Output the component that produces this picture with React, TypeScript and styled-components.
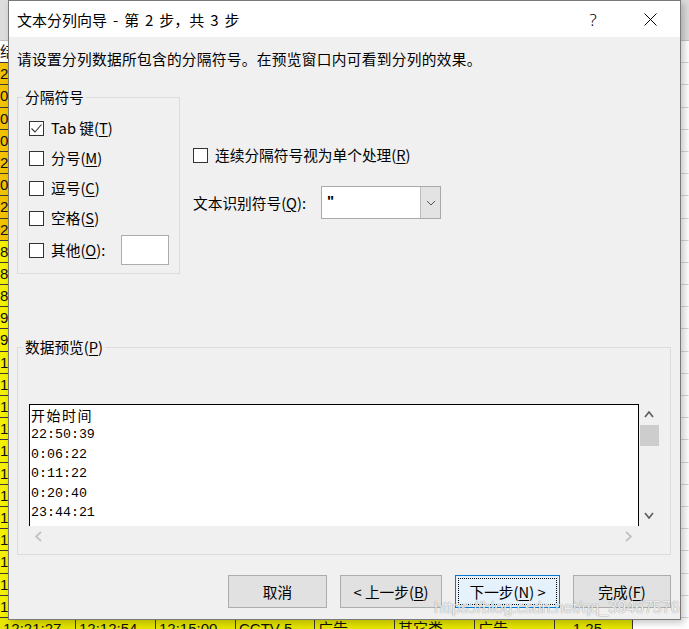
import React from "react";
import styled, { createGlobalStyle } from "styled-components";

const GlobalStyle = createGlobalStyle`
  html, body { margin: 0; padding: 0; background: #ffffff; }
  body { font-family: "Noto Sans CJK SC", sans-serif; }
  #root { width: 689px; height: 629px; }
`;

type Tone = "head" | "orange" | "yellow" | "lime" | "blank";

const toneBg: Record<Tone, string> = {
  head: "#ffffff",
  orange: "#f3c200",
  yellow: "#f4f000",
  lime: "#e6e600",
  blank: "#ffffff",
};

const Desktop = styled.div`
  position: relative;
  width: 689px;
  height: 629px;
  overflow: hidden;
  background: #ffffff;
`;

const Sheet = styled.div`
  display: flex;
  flex-direction: column;
  width: 689px;
`;

const SheetHeader = styled.div`
  box-sizing: border-box;
  height: 41px;
  background: #dcdcdc;
  border-bottom: 1px solid #c2c2c2;
`;

const SheetRow = styled.div`
  display: grid;
  grid-template-columns: 76px 80px 80px 79px 80px 80px 80px 78px 1fr;
  height: 22.2px;
`;

const Cell = styled.div<{ $tone: Tone; $align?: "left" | "right" }>`
  box-sizing: border-box;
  background: ${(p) => toneBg[p.$tone]};
  border-bottom: 1px solid ${(p) => (p.$tone === "blank" ? "#d6d6d6" : "#3a3a3a")};
  border-right: 1px solid ${(p) => (p.$tone === "blank" ? "transparent" : "#3a3a3a")};
  font: 15px/21px "Liberation Sans", "Noto Sans CJK SC", sans-serif;
  color: #111111;
  text-align: ${(p) => p.$align ?? "left"};
  padding: 0 ${(p) => (p.$align === "right" ? "30px" : "0")} 0 ${(p) => (p.$align === "right" ? "0" : "3px")};
  white-space: nowrap;
  overflow: hidden;
`;

const FirstCell = styled(Cell)`
  padding-left: 0;
`;

const Dialog = styled.div`
  position: absolute;
  left: 8px;
  top: 0;
  box-sizing: border-box;
  width: 673px;
  height: 620px;
  display: flex;
  flex-direction: column;
  background: #f0f0f0;
  border: 1px solid #7a7a7a;
  box-shadow: 3px 3px 7px rgba(0, 0, 0, 0.22);
  font-family: "Noto Sans CJK SC", sans-serif;
  color: #000000;
`;

const TitleBar = styled.div`
  height: 36px;
  flex: none;
  display: flex;
  align-items: center;
  background: #ffffff;
  padding-left: 8px;
  padding-right: 23px;
`;

const TitleText = styled.div`
  flex: 1;
  font-size: 15px;
  word-spacing: 2.6px;
  line-height: 36px;
  padding-top: 1px;
  white-space: nowrap;
`;

const HelpGlyph = styled.div`
  width: 20px;
  text-align: center;
  font: 300 17px/20px "Noto Sans", "DejaVu Sans", sans-serif;
  padding-top: 2px;
`;

const CloseGlyph = styled.div`
  width: 14px;
  height: 14px;
  margin-left: 40px;
  display: flex;
  align-items: center;
  justify-content: center;
`;

const Body = styled.div`
  flex: 1;
  display: flex;
  flex-direction: column;
  padding: 12px 9px 0 8px;
  font-size: 14.7px;
`;

const Instruction = styled.div`
  line-height: 20px;
  letter-spacing: 0.3px;
  white-space: nowrap;
`;

const OptionsArea = styled.div`
  display: flex;
  margin-top: 18px;
`;

const GroupBox = styled.fieldset<{ $w?: number; $h: number }>`
  box-sizing: border-box;
  margin: 0;
  min-width: 0;
  width: ${(p) => (p.$w ? `${p.$w}px` : "auto")};
  height: ${(p) => p.$h}px;
  border: 1px solid #dcdcdc;
  display: flex;
  flex-direction: column;
`;

const DelimGroup = styled(GroupBox)`
  padding: 6px 10px 0 11px;
`;

const PreviewGroup = styled(GroupBox)`
  margin-top: 63px;
  padding: 47px 11px 8px 11px;
`;

const GroupLegend = styled.legend`
  padding: 0 2px;
  margin-left: -6px;
  line-height: 20px;
  height: 20px;
  font-size: 14.7px;
`;

const OptionRow = styled.div<{ $gapTop?: number }>`
  display: flex;
  align-items: center;
  height: 30px;
  margin-top: ${(p) => p.$gapTop ?? 0}px;
  white-space: nowrap;
  line-height: 20px;
`;

const Box = styled.span`
  box-sizing: border-box;
  width: 15px;
  height: 15px;
  flex: none;
  border: 1px solid #333333;
  background: #ffffff;
  display: inline-flex;
  align-items: center;
  justify-content: center;
  margin-right: 7px;
`;

const Mnemonic = styled.u`
  text-decoration: underline;
  text-underline-offset: 2px;
  text-decoration-thickness: 1px;
`;

const OtherInput = styled.div`
  box-sizing: border-box;
  width: 48px;
  height: 30px;
  margin-left: auto;
  background: #ffffff;
  border: 1px solid #adadad;
`;

const RightColumn = styled.div`
  display: flex;
  flex-direction: column;
  margin-left: 13px;
  padding-top: 58px;
`;

const SideOption = styled.div`
  display: flex;
  align-items: center;
  height: 20px;
  line-height: 20px;
  white-space: nowrap;
`;

const QualifierRow = styled.div`
  display: flex;
  align-items: center;
  margin-top: 21px;
  height: 33px;
`;

const QualifierLabel = styled.span`
  width: 128px;
  white-space: nowrap;
  line-height: 20px;
`;

const Combo = styled.div`
  box-sizing: border-box;
  width: 120px;
  height: 33px;
  display: flex;
  background: #ffffff;
  border: 1px solid #a9a9a9;
`;

const ComboValue = styled.div`
  flex: 1;
  padding: 3px 0 0 5px;
  font: bold 15px/22px "Liberation Sans", sans-serif;
`;

const ComboButton = styled.div`
  width: 19px;
  display: flex;
  align-items: center;
  justify-content: center;
  background: #e3e3e3;
  border-left: 1px solid #bcbcbc;
`;

const PreviewFrame = styled.div`
  display: grid;
  grid-template-columns: 610px 20px;
  grid-template-rows: 122px 20px;
`;

const PreviewText = styled.div`
  box-sizing: border-box;
  background: #ffffff;
  border: 1px solid #000000;
  border-bottom: none;
  padding: 1px 0 0 1px;
  overflow: hidden;
`;

const PreviewLine = styled.div<{ $cjk?: boolean }>`
  height: 19.4px;
  line-height: 19.4px;
  white-space: nowrap;
  font-family: ${(p) => (p.$cjk ? `"Noto Sans CJK SC", sans-serif` : `"Liberation Mono", monospace`)};
  font-size: ${(p) => (p.$cjk ? "14px" : "13.3px")};
  letter-spacing: ${(p) => (p.$cjk ? "1.5px" : "0")};
`;

const VScroll = styled.div`
  display: flex;
  flex-direction: column;
`;

const ArrowCell = styled.div`
  height: 21px;
  display: flex;
  align-items: center;
  justify-content: center;
  flex: none;
`;

const Thumb = styled.div`
  height: 21px;
  margin-left: 1px;
  background: #cdcdcd;
  flex: none;
`;

const Spacer = styled.div`
  flex: 1;
`;

const HScroll = styled.div`
  display: flex;
  align-items: center;
  justify-content: space-between;
  padding-right: 1px;
`;

const HArrow = styled.div`
  width: 19px;
  height: 20px;
  display: flex;
  align-items: center;
  justify-content: center;
`;

const ButtonRow = styled.div`
  display: flex;
  justify-content: flex-end;
  gap: 13px;
  margin-top: 20px;
`;

const Button = styled.div<{ $w: number; $default?: boolean }>`
  box-sizing: border-box;
  width: ${(p) => p.$w}px;
  height: 33px;
  display: flex;
  align-items: center;
  justify-content: center;
  background: ${(p) => (p.$default ? "#e5f1fb" : "#e1e1e1")};
  border: 1px solid ${(p) => (p.$default ? "#0078d7" : "#adadad")};
  outline: ${(p) => (p.$default ? "1px dotted #000000" : "none")};
  outline-offset: -4px;
  font-size: 14.7px;
  line-height: 20px;
  white-space: nowrap;
`;

const Watermark = styled.div`
  position: absolute;
  left: 434px;
  top: 598px;
  font: 16px/20px "Liberation Sans", Arial, sans-serif;
  color: rgba(255, 255, 255, 0.85);
  text-shadow: 0 0 1px rgba(90, 90, 90, 0.55), 0 0 1px rgba(90, 90, 90, 0.35);
  white-space: nowrap;
  pointer-events: none;
`;

const Check = () => (
  <svg width="13" height="13" viewBox="0 0 13 13">
    <polyline points="1.5,6.5 5,10 11.5,2.5" fill="none" stroke="#333" strokeWidth="1.1" />
  </svg>
);

const Chevron = ({ dir, color, w, h, sw }: { dir: "up" | "down" | "left" | "right"; color: string; w: number; h: number; sw: number }) => {
  const pts: Record<string, string> = {
    up: `1,${h - 1} ${w / 2},1 ${w - 1},${h - 1}`,
    down: `1,1 ${w / 2},${h - 1} ${w - 1},1`,
    left: `${w - 1},1 1,${h / 2} ${w - 1},${h - 1}`,
    right: `1,1 ${w - 1},${h / 2} 1,${h - 1}`,
  };
  return (
    <svg width={w} height={h} viewBox={`0 0 ${w} ${h}`}>
      <polyline points={pts[dir]} fill="none" stroke={color} strokeWidth={sw} />
    </svg>
  );
};

const firstCol: string[] = [
  "结束时间", "2", "0", "0", "0", "2", "0", "2", "2", "8", "8", "8", "9", "9",
  "1", "1", "1", "1", "1", "1", "1", "1", "1", "1", "1", "1",
];

const lastRow = ["12:21:27", "12:12:54", "12:15:00", "CCTV-5", "广告", "其它类", "广告", "1.25"];

const toneFor = (i: number): Tone => (i === 0 ? "head" : i <= 8 ? "orange" : "yellow");

const delimiters = [
  { label: "Tab 键", key: "T", checked: true },
  { label: "分号", key: "M" },
  { label: "逗号", key: "C" },
  { label: "空格", key: "S" },
];

const previewLines = ["22:50:39", "0:06:22", "0:11:22", "0:20:40", "23:44:21"];

export default function App() {
  return (
    <>
      <GlobalStyle />
      <Desktop>
        <Sheet>
          <SheetHeader />
          {firstCol.map((v, i) => (
            <SheetRow key={i}>
              <FirstCell $tone={toneFor(i)}>{v}</FirstCell>
              {Array.from({ length: 7 }).map((_, j) => (
                <Cell key={j} $tone={toneFor(i)} />
              ))}
              <Cell $tone="blank" />
            </SheetRow>
          ))}
          <SheetRow>
            {lastRow.map((v, j) => (
              <Cell key={j} $tone="lime" $align={j === 7 ? "right" : "left"}>
                {v}
              </Cell>
            ))}
            <Cell $tone="blank" />
          </SheetRow>
        </Sheet>

        <Dialog>
          <TitleBar>
            <TitleText>文本分列向导 - 第 2 步，共 3 步</TitleText>
            <HelpGlyph>?</HelpGlyph>
            <CloseGlyph>
              <svg width="13" height="13" viewBox="0 0 13 13">
                <line x1="0.5" y1="0.5" x2="12.5" y2="12.5" stroke="#000" strokeWidth="1" />
                <line x1="12.5" y1="0.5" x2="0.5" y2="12.5" stroke="#000" strokeWidth="1" />
              </svg>
            </CloseGlyph>
          </TitleBar>

          <Body>
            <Instruction>请设置分列数据所包含的分隔符号。在预览窗口内可看到分列的效果。</Instruction>

            <OptionsArea>
              <DelimGroup $w={163} $h={187}>
                <GroupLegend>分隔符号</GroupLegend>
                {delimiters.map((d) => (
                  <OptionRow key={d.key}>
                    <Box>{d.checked ? <Check /> : null}</Box>
                    <span>
                      {d.label}(<Mnemonic>{d.key}</Mnemonic>)
                    </span>
                  </OptionRow>
                ))}
                <OptionRow $gapTop={2}>
                  <Box />
                  <span>
                    其他(<Mnemonic>O</Mnemonic>):
                  </span>
                  <OtherInput />
                </OptionRow>
              </DelimGroup>

              <RightColumn>
                <SideOption>
                  <Box />
                  <span>
                    连续分隔符号视为单个处理(<Mnemonic>R</Mnemonic>)
                  </span>
                </SideOption>
                <QualifierRow>
                  <QualifierLabel>
                    文本识别符号(<Mnemonic>Q</Mnemonic>):
                  </QualifierLabel>
                  <Combo>
                    <ComboValue>"</ComboValue>
                    <ComboButton>
                      <Chevron dir="down" color="#555" w={10} h={6} sw={1} />
                    </ComboButton>
                  </Combo>
                </QualifierRow>
              </RightColumn>
            </OptionsArea>

            <PreviewGroup $h={218}>
              <GroupLegend>
                数据预览(<Mnemonic>P</Mnemonic>)
              </GroupLegend>
              <PreviewFrame>
                <PreviewText>
                  <PreviewLine $cjk>开始时间</PreviewLine>
                  {previewLines.map((l, i) => (
                    <PreviewLine key={i}>{l}</PreviewLine>
                  ))}
                </PreviewText>
                <VScroll>
                  <ArrowCell>
                    <Chevron dir="up" color="#606060" w={10} h={7} sw={1.7} />
                  </ArrowCell>
                  <Thumb />
                  <Spacer />
                  <ArrowCell>
                    <Chevron dir="down" color="#606060" w={10} h={7} sw={1.7} />
                  </ArrowCell>
                </VScroll>
                <HScroll>
                  <HArrow>
                    <Chevron dir="left" color="#c2c2c2" w={7} h={11} sw={1.8} />
                  </HArrow>
                  <HArrow>
                    <Chevron dir="right" color="#c2c2c2" w={7} h={11} sw={1.8} />
                  </HArrow>
                </HScroll>
                <div />
              </PreviewFrame>
            </PreviewGroup>

            <ButtonRow>
              <Button $w={99}>取消</Button>
              <Button $w={102}>
                &lt; 上一步(<Mnemonic>B</Mnemonic>)
              </Button>
              <Button $w={105} $default>
                下一步(<Mnemonic>N</Mnemonic>) &gt;
              </Button>
              <Button $w={98}>
                完成(<Mnemonic>F</Mnemonic>)
              </Button>
            </ButtonRow>
          </Body>
        </Dialog>

        <Watermark>https://blog.csdn.net/qq_39467576</Watermark>
      </Desktop>
    </>
  );
}
